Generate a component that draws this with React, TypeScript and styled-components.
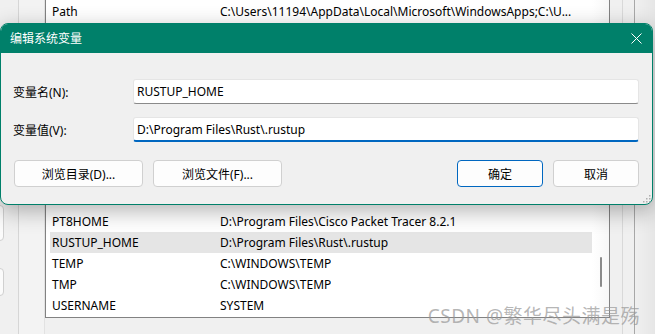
import React from 'react';
import styled, { createGlobalStyle } from 'styled-components';

const GlobalStyle = createGlobalStyle`
  html, body { margin: 0; padding: 0; background: #f0f0f0; }
  body {
    font-family: "Noto Sans", "Noto Sans CJK SC", sans-serif;
    font-size: 12px;
    color: #000;
  }
`;

const Desktop = styled.div`
  position: relative;
  width: 655px;
  height: 334px;
  overflow: hidden;
  background: #f0f0f0;
`;

/* ---- background window (环境变量) ---- */

const BackWindow = styled.div`
  display: flex;
  height: 100%;
`;

const SideStrip = styled.div<{ $w: number; $line: string; $bg?: string }>`
  width: ${p => p.$w}px;
  flex-shrink: 0;
  border-right: 1px solid ${p => p.$line};
  background: ${p => p.$bg || '#f0f0f0'};
  display: flex;
  flex-direction: column;
`;

const StubButton = styled.div<{ $top: number; $h: number }>`
  margin-top: ${p => p.$top}px;
  margin-left: -20px;
  width: 22px;
  height: ${p => p.$h}px;
  background: #fbfbfb;
  border: 1px solid #d0d0d0;
  border-radius: 4px;
`;

const ListBox = styled.div`
  display: flex;
  width: 563px;
  flex-shrink: 0;
  margin-top: -1px;
  height: 317px;
  border: 1px solid #828282;
  background: #fff;
`;

const Rows = styled.div`
  flex: 1;
  display: flex;
  flex-direction: column;
  padding-top: 1px;
`;

const Row = styled.div<{ $selected?: boolean }>`
  display: flex;
  height: 21px;
  flex-shrink: 0;
  align-items: center;
  margin-left: 4px;
  padding-left: 2px;
  white-space: nowrap;
  overflow: hidden;
  background: ${p => (p.$selected ? '#e5e5e5' : 'transparent')};
`;

const NameCell = styled.span`
  width: 168px;
  flex-shrink: 0;
`;

const ValueCell = styled.span`
  overflow: hidden;
  text-overflow: ellipsis;
`;

const ScrollTrack = styled.div`
  width: 17px;
  flex-shrink: 0;
  display: flex;
  flex-direction: column;
  align-items: center;
  background: linear-gradient(90deg, #ffffff, #f7f7f7);
`;

const ScrollThumb = styled.div`
  margin-top: 257px;
  width: 2px;
  height: 30px;
  border-radius: 1px;
  background: #8a8a8a;
`;

const RightRest = styled.div`
  flex: 1;
  background: linear-gradient(90deg, #f0f0f0, #e6e6e6);
`;

/* ---- edit dialog ---- */

const Dialog = styled.div`
  position: absolute;
  left: 0;
  top: 23px;
  width: 653px;
  height: 182px;
  box-sizing: border-box;
  border: 1px solid #00806a;
  border-radius: 8px;
  overflow: hidden;
  background: #f0f0f0;
  box-shadow: 0 6px 22px rgba(0, 0, 0, 0.3);
  display: flex;
  flex-direction: column;
`;

const TitleBar = styled.div`
  height: 29px;
  flex-shrink: 0;
  background: #00806a;
  color: #fff;
  display: flex;
  align-items: center;
  padding: 0 10px 0 9px;
  justify-content: space-between;
`;

const Title = styled.span`
  font-size: 12px;
  padding-bottom: 1px;
`;

const Body = styled.div`
  flex: 1;
  padding: 26px 13px 0 12px;
  display: flex;
  flex-direction: column;
`;

const Field = styled.div<{ $gap: number }>`
  display: flex;
  align-items: center;
  margin-bottom: ${p => p.$gap}px;
`;

const Label = styled.label`
  width: 120px;
  flex-shrink: 0;
`;

const Input = styled.div<{ $focused?: boolean }>`
  flex: 1;
  height: 25px;
  box-sizing: border-box;
  background: #fff;
  border: 1px solid #e5e5e5;
  border-bottom: ${p => (p.$focused ? '2px solid #0067c0' : '1px solid #8a8a8a')};
  border-radius: 3px;
  padding: 0 3px;
  display: flex;
  align-items: center;
  padding-bottom: ${p => (p.$focused ? 0 : 1)}px;
`;

const ButtonRow = styled.div`
  display: flex;
  align-items: center;
  gap: 10px;
  padding-left: 1px;
`;

const Spacer = styled.div`
  flex: 1;
`;

const Button = styled.div<{ $w: number; $primary?: boolean }>`
  width: ${p => p.$w}px;
  height: 27px;
  box-sizing: border-box;
  background: #fdfdfd;
  border: 1px solid ${p => (p.$primary ? '#0067c0' : '#d0d0d0')};
  border-radius: 4px;
  display: flex;
  align-items: center;
  justify-content: center;
`;

const Grip = styled.svg`
  position: absolute;
  right: 1px;
  bottom: 1px;
`;

const Watermark = styled.div`
  position: absolute;
  right: 15px;
  bottom: 5px;
  font-family: "Noto Sans", "Noto Sans CJK SC", sans-serif;
  font-size: 19px;
  color: rgba(150, 150, 150, 0.7);
  letter-spacing: 0.5px;
`;

// rows hidden behind the dialog are kept as blank lines so the list keeps its pitch
const rows: [string, string][] = [
  ['Path', 'C:\\Users\\11194\\AppData\\Local\\Microsoft\\WindowsApps;C:\\U...'],
  ['', ''],
  ['', ''],
  ['', ''],
  ['', ''],
  ['', ''],
  ['', ''],
  ['', ''],
  ['', ''],
  ['', ''],
  ['PT8HOME', 'D:\\Program Files\\Cisco Packet Tracer 8.2.1'],
  ['RUSTUP_HOME', 'D:\\Program Files\\Rust\\.rustup'],
  ['TEMP', 'C:\\WINDOWS\\TEMP'],
  ['TMP', 'C:\\WINDOWS\\TEMP'],
  ['USERNAME', 'SYSTEM'],
];

const App: React.FC = () => {
  return (
    <Desktop>
      <GlobalStyle />
      <BackWindow>
        <SideStrip $w={18} $line="#d6d6d6">
          <StubButton $top={205} $h={34} />
          <StubButton $top={27} $h={26} />
        </SideStrip>
        <SideStrip $w={25} $line="#e2e2e2" $bg="#f3f3f3" />
        <ListBox>
          <Rows>
            {rows.map(([name, value], i) => (
              <Row key={i} $selected={name === 'RUSTUP_HOME'}>
                <NameCell>{name}</NameCell>
                <ValueCell>{value}</ValueCell>
              </Row>
            ))}
          </Rows>
          <ScrollTrack>
            <ScrollThumb />
          </ScrollTrack>
        </ListBox>
        <SideStrip $w={12} $line="#d9d9d9" />
        <SideStrip $w={11} $line="#a8a8a8" />
        <RightRest />
      </BackWindow>

      <Dialog>
        <TitleBar>
          <Title>编辑系统变量</Title>
          <svg width="11" height="11" viewBox="0 0 11 11">
            <path d="M0.5 0.5L10.5 10.5M10.5 0.5L0.5 10.5" stroke="#fff" strokeWidth="1" />
          </svg>
        </TitleBar>
        <Body>
          <Field $gap={13}>
            <Label>变量名(N):</Label>
            <Input>RUSTUP_HOME</Input>
          </Field>
          <Field $gap={18}>
            <Label>变量值(V):</Label>
            <Input $focused>D:\Program Files\Rust\.rustup</Input>
          </Field>
          <ButtonRow>
            <Button $w={129}>浏览目录(D)...</Button>
            <Button $w={129}>浏览文件(F)...</Button>
            <Spacer />
            <Button $w={86} $primary>确定</Button>
            <Button $w={86}>取消</Button>
          </ButtonRow>
        </Body>
        <Grip width="8" height="8" viewBox="0 0 8 8">
          <rect x="6" y="0" width="1.5" height="1.5" fill="#b0b0b0" />
          <rect x="3" y="3" width="1.5" height="1.5" fill="#b0b0b0" />
          <rect x="6" y="3" width="1.5" height="1.5" fill="#b0b0b0" />
          <rect x="0" y="6" width="1.5" height="1.5" fill="#b0b0b0" />
          <rect x="3" y="6" width="1.5" height="1.5" fill="#b0b0b0" />
          <rect x="6" y="6" width="1.5" height="1.5" fill="#b0b0b0" />
        </Grip>
      </Dialog>

      <Watermark>CSDN @繁华尽头满是殇</Watermark>
    </Desktop>
  );
};

export default App;
